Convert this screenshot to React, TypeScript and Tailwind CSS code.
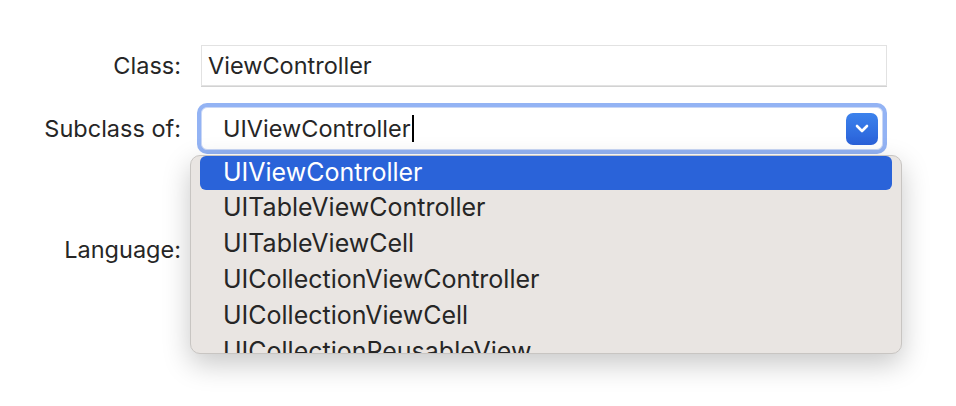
import { useState } from 'react';

const options = [
  'UIViewController',
  'UITableViewController',
  'UITableViewCell',
  'UICollectionViewController',
  'UICollectionViewCell',
  'UICollectionReusableView',
];

const App = () => {
  const [selected] = useState(0);

  return (
    <div className="relative h-[406px] w-[956px] overflow-hidden bg-white font-['Inter',sans-serif] text-[23.5px] text-[#262626]">
      <div className="grid grid-cols-[181px_686px] gap-x-[20px] pt-[45px]">
        {/* Class */}
        <div className="flex h-[41px] items-center justify-end">Class:</div>
        <div className="flex h-[41px] items-center border border-[#e2e2e2] bg-white pl-[6px] shadow-[0_1px_0_#d2d2d2]">
          ViewController
        </div>

        {/* Subclass of */}
        <div className="mt-[17px] flex h-[51px] items-center justify-end">Subclass of:</div>
        <div className="mt-[17px] ml-[-4px] w-[690px] rounded-[10px] bg-[#93b3f4] p-[4px]">
          <div className="flex h-[43px] items-center justify-between rounded-[6px] border border-[#c9d7f6] bg-white pl-[21px] pr-[4px]">
            <div className="flex items-center">
              <span>UIViewController</span>
              <span className="ml-[1px] h-[27px] w-[2px] bg-black" />
            </div>
            <div className="flex h-[32px] w-[32px] items-center justify-center rounded-[7px] bg-gradient-to-b from-[#3c82ec] to-[#2a61d9]">
              <svg width="14" height="9" viewBox="0 0 14 9" fill="none">
                <path d="M2 2 L7 7 L12 2" stroke="white" strokeWidth="2.6" strokeLinecap="round" strokeLinejoin="round" />
              </svg>
            </div>
          </div>
        </div>

        {/* Language */}
        <div className="mt-[75px] flex h-[41px] items-center justify-end">Language:</div>
        <div className="mt-[75px] h-[41px]" />
      </div>

      {/* Combo box popup */}
      <div className="absolute left-[190px] top-[155px] h-[199px] w-[712px] overflow-hidden rounded-[10px] border border-[#c8c5c2] bg-[#e9e5e2] px-[9px] text-[25px] shadow-[0_10px_28px_rgba(0,0,0,0.22)]">
        {options.map((opt, i) => (
          <div
            key={opt}
            className={
              i === selected
                ? 'flex h-[34px] items-center rounded-[6px] bg-[#2a63d9] pl-[23px] text-white'
                : 'flex h-[36px] items-center pl-[23px] text-[#262626]'
            }
          >
            {opt}
          </div>
        ))}
      </div>
    </div>
  );
};

export default App;
